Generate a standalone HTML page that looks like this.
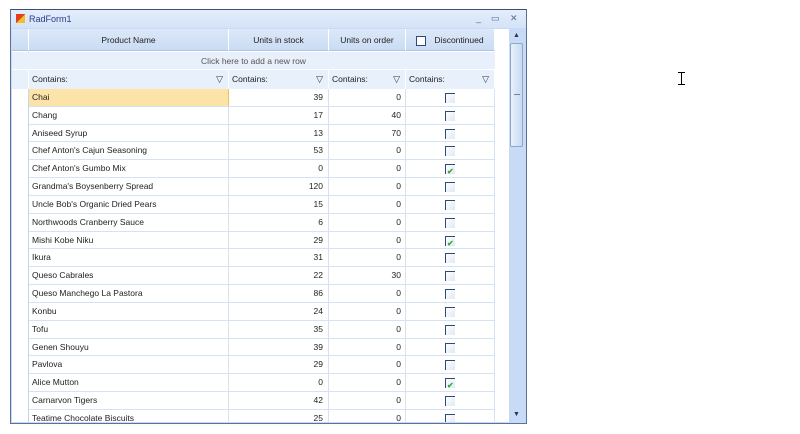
<!DOCTYPE html>
<html><head><meta charset="utf-8"><style>
*{margin:0;padding:0;box-sizing:border-box}
body{width:800px;height:434px;background:#fff;position:relative;overflow:hidden;font-family:"Liberation Sans",sans-serif;font-size:8.5px;color:#222}
.win{position:absolute;left:10px;top:9px;width:517px;height:415px;background:#c7dbf6;border:1px solid #5a7198;border-top:1px solid #3b4f70}
.title{position:absolute;left:0;top:0;width:515px;height:18px;background:linear-gradient(#e4eefc,#d4e3f8);}
.title .ic{position:absolute;left:5px;top:4px;width:9px;height:9px;background:linear-gradient(135deg,#e04020 50%,#f4c020 50%);}
.title .t{position:absolute;left:18px;top:4px;color:#2a3a8a;font-size:9px}
.ctrl{position:absolute;top:3px;color:#5a6a8a;font-size:9px}
.grid{position:absolute;left:1px;top:19px;width:497px;height:393px;background:#fff;overflow:hidden}
.hdr{position:absolute;top:0;height:22px;background:linear-gradient(#dce8f8,#cadcf4);border-right:1px solid #fff;border-bottom:1px solid #b0c4e0;text-align:center;line-height:22px;font-size:8.5px;color:#222}
.newrow{position:absolute;left:0;top:23px;width:483px;height:18px;background:#e8f0fb;border-bottom:1px solid #fff;text-align:center;line-height:18px;color:#555}
.filt{position:absolute;top:41px;height:19px;background:#e8f0fb;line-height:19px;padding-left:3px;border-right:1px solid #fff}
.fi{position:absolute;right:5px;top:0;font-size:9px;color:#334}
.ind{position:absolute;left:0;top:0;width:17px;height:400px;background:#fff;border-right:1px solid #c4d6ee}
.row{position:absolute;left:17px;width:466px;height:17.83px;border-bottom:1px solid #d4e2f4}
.c{position:absolute;top:0;height:100%;line-height:17px;border-right:1px solid #d4e2f4}
.cb{position:absolute;left:39px;top:4px;width:10px;height:10px;border-left:1.5px solid #2c4a78;border-top:1.5px solid #2c4a78;background:linear-gradient(135deg,#fff,#dfe8f4)}
.ck{position:absolute;left:1px;top:-2px;color:#3a3;font-size:8px;font-weight:bold}
.sb{position:absolute;left:498px;top:19px;width:16px;height:393px;background:#c7dbf6}
.thumb{position:absolute;left:1px;top:14px;width:13px;height:104px;border:1px solid #8ea8cc;background:linear-gradient(90deg,#e8f0fb,#c8daf2);border-radius:2px}
</style></head><body>
<div class="win">
<div class="title"><div class="ic"></div><div class="t">RadForm1</div>
<div class="ctrl" style="left:465px">_</div><div class="ctrl" style="left:480px">▭</div><div class="ctrl" style="left:499px">✕</div></div>
<div class="grid">
<div class="ind"></div>
<div class="hdr" style="left:0;width:17px"></div>
<div class="hdr" style="left:17px;width:200px">Product Name</div>
<div class="hdr" style="left:217px;width:100px">Units in stock</div>
<div class="hdr" style="left:317px;width:77px">Units on order</div>
<div class="hdr" style="left:394px;width:89px"><span style="display:inline-block;width:10px;height:10px;border:1px solid #2c4a78;background:#fff;vertical-align:middle;margin-right:8px"></span>Discontinued</div>
<div class="newrow" style="width:483px">Click here to add a new row</div>
<div class="filt" style="left:0;width:17px;padding:0"></div>
<div class="filt" style="left:17px;width:200px">Contains:<span class="fi">▽</span></div>
<div class="filt" style="left:217px;width:100px">Contains:<span class="fi">▽</span></div>
<div class="filt" style="left:317px;width:77px">Contains:<span class="fi">▽</span></div>
<div class="filt" style="left:394px;width:89px">Contains:<span class="fi">▽</span></div>
<div id="rows"></div>
</div>
<div class="sb"><div style="position:absolute;left:4px;top:3px;font-size:7px;color:#334">▲</div><div class="thumb"><div style="position:absolute;left:3px;top:50px;width:6px;height:1px;background:#6a84aa"></div></div><div style="position:absolute;left:4px;top:382px;font-size:7px;color:#334">▼</div></div>
</div>
<div style="position:absolute;left:681px;top:72px;width:1px;height:12px;background:#000"></div>
<div style="position:absolute;left:678px;top:72px;width:7px;height:1px;background:#000"></div>
<div style="position:absolute;left:678px;top:84px;width:7px;height:1px;background:#000"></div>
<script>
var d=[["Chai",39,0,0],["Chang",17,40,0],["Aniseed Syrup",13,70,0],["Chef Anton's Cajun Seasoning",53,0,0],["Chef Anton's Gumbo Mix",0,0,1],["Grandma's Boysenberry Spread",120,0,0],["Uncle Bob's Organic Dried Pears",15,0,0],["Northwoods Cranberry Sauce",6,0,0],["Mishi Kobe Niku",29,0,1],["Ikura",31,0,0],["Queso Cabrales",22,30,0],["Queso Manchego La Pastora",86,0,0],["Konbu",24,0,0],["Tofu",35,0,0],["Genen Shouyu",39,0,0],["Pavlova",29,0,0],["Alice Mutton",0,0,1],["Carnarvon Tigers",42,0,0],["Teatime Chocolate Biscuits",25,0,0]];
var h="";d.forEach(function(r,i){var t=60+i*17.83;
h+='<div class="row" style="top:'+t+'px"><div class="c" style="left:0;width:200px;padding-left:3px;'+(i==0?'background:#fce4a8;border-right:1px solid #f0c060':'')+'">'+r[0]+'</div><div class="c" style="left:200px;width:100px;text-align:right;padding-right:5px">'+r[1]+'</div><div class="c" style="left:300px;width:77px;text-align:right;padding-right:4px">'+r[2]+'</div><div class="c" style="left:377px;width:89px"><div class="cb">'+(r[3]?'<span class="ck">✔</span>':'')+'</div></div></div>';});
document.getElementById("rows").innerHTML=h;
</script>
</body></html>
